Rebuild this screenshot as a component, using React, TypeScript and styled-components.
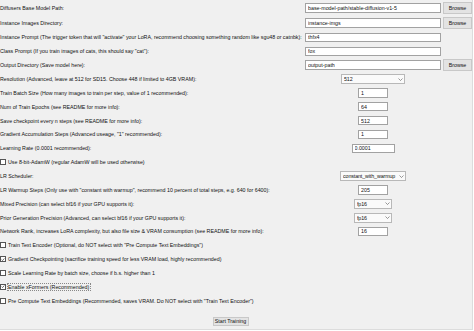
import styled, { createGlobalStyle } from "styled-components";

const GlobalStyle = createGlobalStyle`
  html, body {
    margin: 0;
    padding: 0;
    background: #ffffff;
  }
  body {
    font-family: "Liberation Sans", Arial, sans-serif;
    font-size: 5.3px;
    color: #111;
  }
`;

const Window = styled.div`
  width: 472px;
  height: 329px;
  background: #f0f0f0;
  border-right: 1px solid #dcdcdc;
  border-bottom: 1px solid #dcdcdc;
  overflow: hidden;
  display: flex;
  flex-direction: column;
`;

const Form = styled.div`
  display: grid;
  grid-template-columns: 304px 138px 30px;
  padding-top: 0.5px;
`;

const Label = styled.div<{ $tall?: boolean }>`
  height: ${(p) => (p.$tall ? "15px" : "13.86px")};
  display: flex;
  align-items: center;
  white-space: nowrap;
`;

const Cell = styled.div<{ $tall?: boolean }>`
  height: ${(p) => (p.$tall ? "15px" : "13.86px")};
  display: flex;
  align-items: center;
  justify-content: center;
`;

const Field = styled.input<{ $w: number }>`
  box-sizing: border-box;
  width: ${(p) => p.$w}px;
  height: 9.5px;
  margin: 0;
  padding: 0 2px;
  border: 1px solid #a2a2a2;
  background: #fff;
  font: inherit;
  color: #111;
  outline: none;
`;

const Combo = styled.div<{ $w: number }>`
  box-sizing: border-box;
  width: ${(p) => p.$w}px;
  height: 10px;
  border: 1px solid #b8b8b8;
  background: #fafafa;
  display: flex;
  align-items: center;
  gap: 1px;
  padding: 0 1.5px 0 2px;
  svg {
    flex-shrink: 0;
  }
`;

const ComboValue = styled.span`
  flex: 1;
  overflow: hidden;
  white-space: nowrap;
  letter-spacing: -0.1px;
`;

const Button = styled.button`
  box-sizing: border-box;
  height: 11px;
  padding: 0 4px;
  margin: 0;
  border: 1px solid #c8c8c8;
  background: #e3e3e3;
  font: inherit;
  color: #111;
`;

const BrowseButton = styled(Button)`
  width: 29px;
  height: 12px;
  margin-left: 1px;
`;

const CheckRow = styled.div`
  grid-column: 1 / -1;
  height: 13.86px;
  display: flex;
  align-items: center;
  gap: 1.5px;
  white-space: nowrap;
`;

const Box = styled.span`
  box-sizing: border-box;
  width: 6px;
  height: 6px;
  border: 1px solid #555;
  background: #fff;
  display: flex;
  align-items: center;
  justify-content: center;
`;

const CheckText = styled.span<{ $focus?: boolean }>`
  padding: 0 0.5px;
  line-height: 6px;
  outline: ${(p) => (p.$focus ? "1px dotted #888" : "none")};
`;

const Footer = styled.div`
  display: flex;
  justify-content: center;
  padding-top: 9px;
  padding-right: 11px;
`;

const StartButton = styled(Button)`
  height: 9.5px;
  width: 36px;
  padding: 0;
`;

const Chevron = () => (
  <svg width="5" height="3" viewBox="0 0 5 3">
    <path d="M0.5 0.5 L2.5 2.5 L4.5 0.5" fill="none" stroke="#555" strokeWidth="0.6" />
  </svg>
);

const Tick = () => (
  <svg width="5" height="5" viewBox="0 0 5 5">
    <path d="M0.8 2.6 L2 3.8 L4.2 1.2" fill="none" stroke="#222" strokeWidth="0.8" />
  </svg>
);

type Row =
  | { kind: "entry"; label: string; value: string; w: number; browse?: boolean }
  | { kind: "combo"; label: string; value: string; w: number }
  | { kind: "check"; label: string; checked?: boolean; focus?: boolean };

const rows: Row[] = [
  { kind: "entry", label: "Diffusers Base Model Path:", value: "base-model-path/stable-diffusion-v1-5", w: 136, browse: true },
  { kind: "entry", label: "Instance Images Directory:", value: "instance-imgs", w: 136, browse: true },
  { kind: "entry", label: "Instance Prompt (The trigger token that will \"activate\" your LoRA, recommend choosing something random like sgu48 or catnbk):", value: "thfx4", w: 136 },
  { kind: "entry", label: "Class Prompt (If you train images of cats, this should say \"cat\"):", value: "fox", w: 136 },
  { kind: "entry", label: "Output Directory (Save model here):", value: "output-path", w: 136, browse: true },
  { kind: "combo", label: "Resolution (Advanced, leave at 512 for SD15. Choose 448 if limited to 4GB VRAM):", value: "512", w: 64 },
  { kind: "entry", label: "Train Batch Size (How many images to train per step, value of 1 recommended):", value: "1", w: 30 },
  { kind: "entry", label: "Num of Train Epochs (see README for more info):", value: "64", w: 30 },
  { kind: "entry", label: "Save checkpoint every n steps (see README for more info):", value: "512", w: 30 },
  { kind: "entry", label: "Gradient Accumulation Steps (Advanced useage, \"1\" recommended):", value: "1", w: 30 },
  { kind: "entry", label: "Learning Rate (0.0001 recommended):", value: "0.0001", w: 43 },
  { kind: "check", label: "Use 8-bit-AdamW (regular AdamW will be used otherwise)" },
  { kind: "combo", label: "LR Scheduler:", value: "constant_with_warmup", w: 66 },
  { kind: "entry", label: "LR Warmup Steps (Only use with \"constant with warmup\", recommend 10 percent of total steps, e.g. 640 for 6400):", value: "205", w: 30 },
  { kind: "combo", label: "Mixed Precision (can select bf16 if your GPU supports it):", value: "fp16", w: 38 },
  { kind: "combo", label: "Prior Generation Precision (Advanced, can select bf16 if your GPU supports it):", value: "fp16", w: 38 },
  { kind: "entry", label: "Network Rank, increases LoRA complexity, but also file size & VRAM consumption (see README for more info):", value: "16", w: 30 },
  { kind: "check", label: "Train Text Encoder (Optional, do NOT select with \"Pre Compute Text Embeddings\")" },
  { kind: "check", label: "Gradient Checkpointing (sacrifice training speed for less VRAM load, highly recommended)", checked: true },
  { kind: "check", label: "Scale Learning Rate by batch size, choose if b.s. higher than 1" },
  { kind: "check", label: "Enable xFormers (Recommended)", checked: true, focus: true },
  { kind: "check", label: "Pre Compute Text Embeddings (Recommended, saves VRAM. Do NOT select with \"Train Text Encoder\")" },
];

function App() {
  return (
    <>
      <GlobalStyle />
      <Window>
        <Form>
          {rows.map((row, i) => {
            if (row.kind === "check") {
              return (
                <CheckRow key={i}>
                  <Box>{row.checked && <Tick />}</Box>
                  <CheckText $focus={row.focus}>{row.label}</CheckText>
                </CheckRow>
              );
            }
            const first = i < 2;
            return [
              <Label key={`l${i}`} $tall={first}>{row.label}</Label>,
              <Cell key={`c${i}`} $tall={first}>
                {row.kind === "entry" ? (
                  <Field $w={row.w} defaultValue={row.value} />
                ) : (
                  <Combo $w={row.w}>
                    <ComboValue>{row.value}</ComboValue>
                    <Chevron />
                  </Combo>
                )}
              </Cell>,
              <Cell key={`b${i}`} $tall={first}>
                {row.kind === "entry" && row.browse && <BrowseButton>Browse</BrowseButton>}
              </Cell>,
            ];
          })}
        </Form>
        <Footer>
          <StartButton>Start Training</StartButton>
        </Footer>
      </Window>
    </>
  );
}

export default App;
